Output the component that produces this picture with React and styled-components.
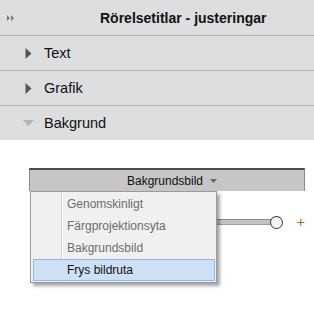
import React from "react";
import styled, { createGlobalStyle } from "styled-components";

const Global = createGlobalStyle`
    html, body {
        margin : 0;
        padding : 0;
        background : #ffffff;
    }
    body {
        font-family : "Liberation Sans", Arial, sans-serif;
        width : 314px;
        height : 336px;
        overflow : hidden;
    }
`

const Panel = styled.div`
    background : #dddedf;
    width : 100%;
`

const Header = styled.div`
    height : 35px;
    display : flex;
    align-items : center;
    border-bottom : 1px solid #b4b4b4;
    padding-left : 7px;
`

const HeaderTitle = styled.span`
    font-weight : bold;
    font-size : 14px;
    color : #111;
    margin-left : 86px;
`

const Row = styled.div`
    height : 34px;
    display : flex;
    align-items : center;
    padding-left : 22px;
    border-bottom : ${props => props.last ? "none" : "1px solid #b4b4b4"};
`

const Arrow = styled.span`
    width : 12px;
    display : flex;
    align-items : center;
    justify-content : center;
    margin-right : 10px;
`

const Label = styled.span`
    font-size : 14.5px;
    color : #111;
`

const Content = styled.div`
    padding : 28px 9px 0 29px;
`

const DropWrap = styled.div`
    position : relative;
`

const DropButton = styled.div`
    height : 21px;
    background : #c6c6c6;
    border-top : 2px solid #4a4a4a;
    border-left : 1px solid #8a8a8a;
    border-right : 1px solid #8a8a8a;
    display : flex;
    align-items : center;
    justify-content : center;
    gap : 7px;
    padding-left : 10px;
    font-size : 12px;
    color : #111;
`

const Menu = styled.div`
    position : absolute;
    top : 100%;
    left : 1px;
    width : 185px;
    padding : 1px 0;
    border : 1px solid #9a9a9a;
    background : linear-gradient(to right, transparent 30px, #d3d3d3 30px, #d3d3d3 31px, #ffffff 31px, #ffffff 32px, transparent 32px), #f0f0f0;
    box-shadow : 3px 3px 3px rgba(0, 0, 0, 0.35);
    z-index : 2;
`

const MenuItem = styled.div`
    height : 22px;
    box-sizing : border-box;
    margin : 0 1px 0 2px;
    display : flex;
    align-items : center;
    padding-left : 33px;
    font-size : 12px;
    color : ${props => props.active ? "#111" : "#6d6d6d"};
    background : ${props => props.active ? "#cde0f6" : "transparent"};
    border : 1px solid ${props => props.active ? "#8fbbec" : "transparent"};
`

const SliderRow = styled.div`
    margin-top : 24px;
    height : 14px;
    display : flex;
    align-items : center;
    padding-left : 40px;
`

const Track = styled.div`
    flex : 0 0 202px;
    height : 4px;
    background : #c4c4c4;
    border-top : 1px solid #8c8c8c;
    border-bottom : 1px solid #9c9c9c;
`

const Thumb = styled.div`
    width : 11px;
    height : 11px;
    border-radius : 50%;
    background : #f4f4f4;
    border : 1.5px solid #3a3a3a;
    margin-left : -1px;
`

const Plus = styled.span`
    margin-left : 14px;
    font-size : 14px;
    color : #b8651a;
    line-height : 1;
`

const DoubleArrow = () => (
    <svg width="7" height="6" viewBox="0 0 7 6">
        <path d="M0 0 L3 3 L0 6 Z M4 0 L7 3 L4 6 Z" fill="#7a7a7a" />
    </svg>
)

const RightArrow = () => (
    <svg width="7" height="11" viewBox="0 0 7 11">
        <path d="M0.5 0 L6.5 5.5 L0.5 11 Z" fill="#555" />
    </svg>
)

const DownArrow = () => (
    <svg width="11" height="6" viewBox="0 0 11 6">
        <path d="M0 0 L11 0 L5.5 6 Z" fill="#b4b4b4" />
    </svg>
)

const Caret = () => (
    <svg width="7" height="4" viewBox="0 0 7 4">
        <path d="M0 0 L7 0 L3.5 4 Z" fill="#6a6a6a" />
    </svg>
)

const items = ["Genomskinligt", "Färgprojektionsyta", "Bakgrundsbild", "Frys bildruta"]

const App = () => {
    return (
        <>
            <Global />
            <Panel>
                <Header>
                    <DoubleArrow />
                    <HeaderTitle>Rörelsetitlar - justeringar</HeaderTitle>
                </Header>
                <Row>
                    <Arrow><RightArrow /></Arrow>
                    <Label>Text</Label>
                </Row>
                <Row>
                    <Arrow><RightArrow /></Arrow>
                    <Label>Grafik</Label>
                </Row>
                <Row last>
                    <Arrow><DownArrow /></Arrow>
                    <Label>Bakgrund</Label>
                </Row>
            </Panel>
            <Content>
                <DropWrap>
                    <DropButton>
                        <span>Bakgrundsbild</span>
                        <Caret />
                    </DropButton>
                    <Menu>
                        {items.map((item, i) => (
                            <MenuItem key={item} active={i === items.length - 1}>{item}</MenuItem>
                        ))}
                    </Menu>
                </DropWrap>
                <SliderRow>
                    <Track />
                    <Thumb />
                    <Plus>+</Plus>
                </SliderRow>
            </Content>
        </>
    )
}

export default App;
